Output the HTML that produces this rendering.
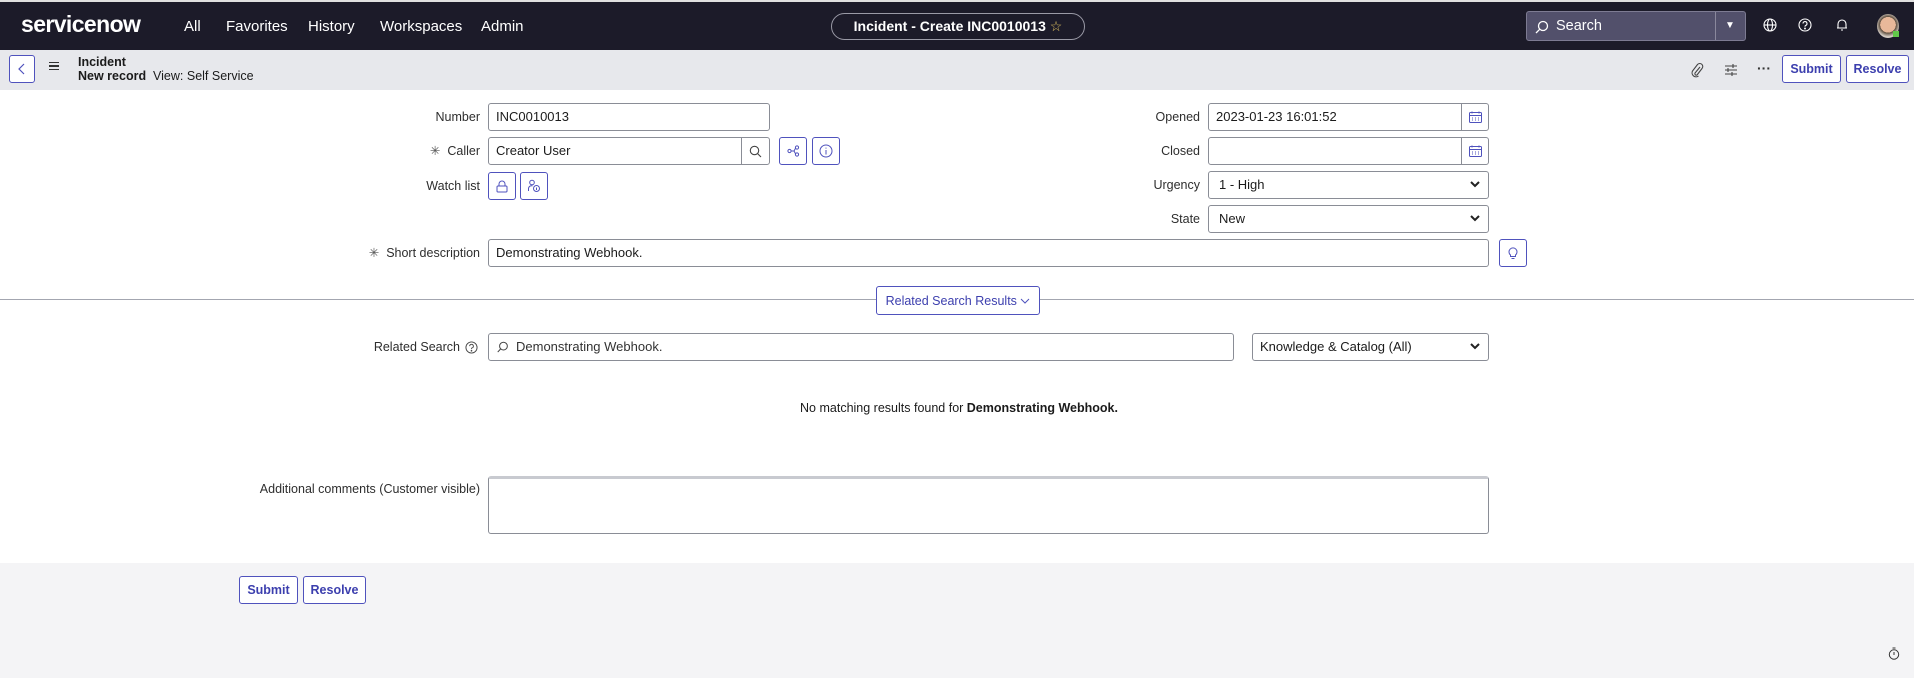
<!DOCTYPE html>
<html><head><meta charset="utf-8"><style>
*{box-sizing:border-box;margin:0;padding:0}
body{width:1914px;height:678px;overflow:hidden;background:#f4f4f6;font-family:"Liberation Sans",sans-serif;color:#1b1b1b;position:relative;font-size:12.5px}
.abs{position:absolute}
#top{left:0;top:0;width:1914px;height:2px;background:#e0e0e0}
#hdr{left:0;top:2px;width:1914px;height:48px;background:#1c1b29;color:#fff}
.nav{top:16px;font-size:15px;color:#fff}
#sub{left:0;top:50px;width:1914px;height:40px;background:#e7e8ec}
#form{left:0;top:90px;width:1914px;height:473px;background:#fff}
.btn{border:1px solid #4f52bd;border-radius:3px;background:#fff;color:#3c3fae;font-size:12.5px;font-weight:bold;display:flex;align-items:center;justify-content:center}
.lbl{text-align:right;font-size:12.5px;color:#2e2e2e;height:28px;line-height:28px}
.inp{border:1px solid #8a8d96;border-radius:3px;background:#fff;height:28px;line-height:26px;padding-left:7px;font-size:13px;color:#1b1b1b}
.ib{border:1px solid #4f52bd;border-radius:3px;background:#fff;width:28px;height:28px;display:flex;align-items:center;justify-content:center}
.seg{position:absolute;top:0;bottom:0;border-left:1px solid #8a8d96;display:flex;align-items:center;justify-content:center}
.chev{position:absolute;right:8px;top:9px}
</style></head><body>
<div id="top" class="abs"></div>
<div id="hdr" class="abs">
 <div class="abs" style="left:21px;top:9px;font-size:23px;font-weight:bold;letter-spacing:-0.6px">servicen<span style="color:#fff">o</span>w</div>
 <div class="abs nav" style="left:184px">All</div>
 <div class="abs nav" style="left:226px">Favorites</div>
 <div class="abs nav" style="left:308px">History</div>
 <div class="abs nav" style="left:380px">Workspaces</div>
 <div class="abs nav" style="left:481px">Admin</div>
 <div class="abs" style="left:831px;top:11px;width:254px;height:27px;border:1px solid #9a9aa6;border-radius:14px;font-weight:bold;font-size:14px;line-height:25px;text-align:center">Incident - Create INC0010013 <span style="color:#e0c060;font-weight:normal">☆</span></div>
 <div class="abs" style="left:1526px;top:9px;width:220px;height:30px;background:#52506b;border:1px solid #7d7b92;border-radius:3px">
  <svg class="abs" style="left:8px;top:8px" width="14" height="14" viewBox="0 0 14 14"><circle cx="8" cy="6" r="4.5" fill="none" stroke="#fff" stroke-width="1.3"/><path d="M4.8 9.2 1 13" stroke="#fff" stroke-width="1.3"/></svg>
  <div class="abs" style="left:29px;top:6px;font-size:14.5px">Search</div>
  <div class="abs" style="left:188px;top:0;width:1px;height:28px;background:#8a889c"></div>
  <div class="abs" style="left:198px;top:8px;font-size:10px">▼</div>
 </div>
 <svg class="abs" style="left:1763px;top:16px" width="14" height="14" viewBox="0 0 14 14" fill="none" stroke="#fff" stroke-width="1.1"><circle cx="7" cy="7" r="6"/><ellipse cx="7" cy="7" rx="2.5" ry="6"/><path d="M1 7h12"/></svg>
 <svg class="abs" style="left:1798px;top:16px" width="14" height="14" viewBox="0 0 14 14" fill="none" stroke="#fff" stroke-width="1.1"><circle cx="7" cy="7" r="6"/><path d="M5 5.5a2 2 0 1 1 2.5 2c-.5.2-.5.6-.5 1.2"/><circle cx="7" cy="10.5" r=".4" fill="#fff"/></svg>
 <svg class="abs" style="left:1835px;top:16px" width="14" height="14" viewBox="0 0 14 14" fill="none" stroke="#fff" stroke-width="1.1"><path d="M3 10V6a4 4 0 0 1 8 0v4zM2 10h10M6 12h2"/></svg>
 <div class="abs" style="left:1877px;top:12px;width:22px;height:24px;border-radius:50%;background:radial-gradient(circle at 50% 45%,#e8b89a 0 45%,#5a4a3a 46%,#d8d0c8 70%)"></div>
 <div class="abs" style="left:1893px;top:29px;width:6px;height:6px;background:#62c94a"></div>
</div>
<div id="sub" class="abs">
 <div class="abs btn" style="left:9px;top:5px;width:26px;height:28px;font-weight:normal">
  <svg width="8" height="12" viewBox="0 0 8 12"><path d="M6 1 1 6l5 5" fill="none" stroke="#4f52bd" stroke-width="1.2"/></svg></div>
 <div class="abs" style="left:49px;top:12px;width:10px;height:8px;border-top:1.5px solid #333;border-bottom:1.5px solid #333"><div style="margin-top:2px;height:1.5px;background:#333"></div></div>
 <div class="abs" style="left:78px;top:5px;font-size:12.5px;font-weight:bold">Incident</div>
 <div class="abs" style="left:78px;top:19px;font-size:12.5px"><b>New record</b>&nbsp; View: Self Service</div>
 <svg class="abs" style="left:1690px;top:12px" width="14" height="16" viewBox="0 0 14 16"><path d="M10 5 5 11a1.5 1.5 0 0 0 2 2l5-6.5a3 3 0 0 0-4.5-4L2.5 9a4 4 0 0 0 6 5" fill="none" stroke="#444" stroke-width="1.1"/></svg>
 <svg class="abs" style="left:1724px;top:13px" width="14" height="14" viewBox="0 0 14 14" stroke="#444" stroke-width="1.1"><path d="M1 3h12M1 7h12M1 11h12"/><path d="M9 1v4M4 5v4M8 9v4"/></svg>
 <div class="abs" style="left:1757px;top:10px;font-size:14px;font-weight:bold;color:#333">···</div>
 <div class="abs btn" style="left:1782px;top:5px;width:59px;height:28px">Submit</div>
 <div class="abs btn" style="left:1846px;top:5px;width:63px;height:28px">Resolve</div>
</div>
<div id="form" class="abs">
 <div class="abs lbl" style="left:280px;width:200px;top:13px">Number</div>
 <div class="abs lbl" style="left:280px;width:200px;top:47px"><span style="color:#555">✳</span>&nbsp; Caller</div>
 <div class="abs lbl" style="left:280px;width:200px;top:82px">Watch list</div>
 <div class="abs lbl" style="left:280px;width:200px;top:149px"><span style="color:#555">✳</span>&nbsp; Short description</div>
 <div class="abs inp" style="left:488px;top:13px;width:282px">INC0010013</div>
 <div class="abs inp" style="left:488px;top:47px;width:282px">Creator User
  <div class="seg" style="left:252px;width:28px"><svg width="13" height="13" viewBox="0 0 13 13" fill="none" stroke="#444" stroke-width="1.1"><circle cx="5.5" cy="5.5" r="4.2"/><path d="m8.5 8.5 3.5 3.5"/></svg></div></div>
 <div class="abs ib" style="left:779px;top:47px"><svg width="13" height="12" viewBox="0 0 13 12" fill="none" stroke="#4f52bd"><circle cx="2.5" cy="6" r="1.6"/><circle cx="10" cy="2.5" r="1.6"/><circle cx="10" cy="9.5" r="1.6"/><path d="M4 6h3M7 6 8.5 3.3M7 6l1.5 2.7"/></svg></div>
 <div class="abs ib" style="left:812px;top:47px"><svg width="14" height="14" viewBox="0 0 14 14" fill="none" stroke="#4f52bd"><circle cx="7" cy="7" r="6"/><path d="M7 6v4.5M7 3.6v1"/></svg></div>
 <div class="abs ib" style="left:488px;top:82px"><svg width="12" height="13" viewBox="0 0 12 13" fill="none" stroke="#4f52bd"><path d="M3 6V4a3 3 0 0 1 6 0v2"/><rect x="1" y="6" width="10" height="6" rx="1"/></svg></div>
 <div class="abs ib" style="left:520px;top:82px"><svg width="14" height="14" viewBox="0 0 14 14" fill="none" stroke="#4f52bd"><circle cx="5" cy="3.5" r="2.3"/><path d="M1.5 12v-2.5a3 3 0 0 1 4-2.6"/><circle cx="9.5" cy="9.5" r="3"/><path d="M9.5 8.5v2.5"/></svg></div>
 <div class="abs inp" style="left:488px;top:149px;width:1001px">Demonstrating Webhook.</div>
 <div class="abs ib" style="left:1499px;top:149px"><svg width="12" height="14" viewBox="0 0 12 14" fill="none" stroke="#4f52bd"><path d="M3.5 9a4 4 0 1 1 5 0v1.5h-5zM4.5 12.5h3"/></svg></div>
 <div class="abs lbl" style="left:1000px;width:200px;top:13px">Opened</div>
 <div class="abs lbl" style="left:1000px;width:200px;top:47px">Closed</div>
 <div class="abs lbl" style="left:1000px;width:200px;top:81px">Urgency</div>
 <div class="abs lbl" style="left:1000px;width:200px;top:115px">State</div>
 <div class="abs inp" style="left:1208px;top:13px;width:281px">2023-01-23 16:01:52
  <div class="seg" style="left:252px;width:28px"><svg width="13" height="12" viewBox="0 0 13 12" fill="none" stroke="#4f52bd"><rect x=".5" y="1.5" width="12" height="10" rx="1"/><path d="M.5 4.5h12M3 .5v2M10 .5v2M3 7h1M6 7h1M9 7h1M3 9h1M6 9h1M9 9h1"/></svg></div></div>
 <div class="abs inp" style="left:1208px;top:47px;width:281px">&nbsp;
  <div class="seg" style="left:252px;width:28px"><svg width="13" height="12" viewBox="0 0 13 12" fill="none" stroke="#4f52bd"><rect x=".5" y="1.5" width="12" height="10" rx="1"/><path d="M.5 4.5h12M3 .5v2M10 .5v2M3 7h1M6 7h1M9 7h1M3 9h1M6 9h1M9 9h1"/></svg></div></div>
 <div class="abs inp" style="left:1208px;top:81px;width:281px;padding-left:10px">1 - High<svg class="chev" width="10" height="7" viewBox="0 0 10 7"><path d="m1 1 4 4 4-4" fill="none" stroke="#222" stroke-width="2"/></svg></div>
 <div class="abs inp" style="left:1208px;top:115px;width:281px;padding-left:10px">New<svg class="chev" width="10" height="7" viewBox="0 0 10 7"><path d="m1 1 4 4 4-4" fill="none" stroke="#222" stroke-width="2"/></svg></div>
 <div class="abs" style="left:0;top:209px;width:1914px;height:1px;background:#a3a6b0"></div>
 <div class="abs btn" style="left:876px;top:196px;width:164px;height:29px;font-weight:normal;background:#fff">Related Search Results&nbsp;<svg width="10" height="6" viewBox="0 0 10 6"><path d="m1 1 4 4 4-4" fill="none" stroke="#4f52bd"/></svg></div>
 <div class="abs lbl" style="left:280px;width:180px;top:243px">Related Search</div>
 <svg class="abs" style="left:465px;top:251px" width="13" height="13" viewBox="0 0 14 14" fill="none" stroke="#444"><circle cx="7" cy="7" r="6"/><path d="M5 5.5a2 2 0 1 1 2.5 2c-.5.2-.5.6-.5 1.2"/><circle cx="7" cy="10.5" r=".4"/></svg>
 <div class="abs inp" style="left:488px;top:243px;width:746px;padding-left:27px;color:#333">Demonstrating Webhook.
  <svg class="abs" style="left:8px;top:7px" width="12" height="12" viewBox="0 0 13 13" fill="none" stroke="#444" stroke-width="1.1"><circle cx="7" cy="5.5" r="4.2"/><path d="M4 8.5.8 12"/></svg></div>
 <div class="abs inp" style="left:1252px;top:243px;width:237px">Knowledge &amp; Catalog (All)<svg class="chev" width="10" height="7" viewBox="0 0 10 7"><path d="m1 1 4 4 4-4" fill="none" stroke="#222" stroke-width="2"/></svg></div>
 <div class="abs" style="left:0;width:1918px;top:311px;text-align:center;font-size:12.5px">No matching results found for <b>Demonstrating Webhook.</b></div>
 <div class="abs lbl" style="left:200px;width:280px;top:385px">Additional comments (Customer visible)</div>
 <div class="abs" style="left:488px;top:386px;width:1001px;height:58px;border:1px solid #8a8d96;border-top:3px solid #c8cad0;border-radius:3px"></div>
</div>
<div class="abs btn" style="left:239px;top:576px;width:59px;height:28px">Submit</div>
<div class="abs btn" style="left:303px;top:576px;width:63px;height:28px">Resolve</div>
<svg class="abs" style="left:1888px;top:647px" width="12" height="13" viewBox="0 0 12 13" fill="none" stroke="#333"><circle cx="6" cy="7.5" r="4.7"/><path d="M6 5v3M4.5 1h3"/></svg>
</body></html>
